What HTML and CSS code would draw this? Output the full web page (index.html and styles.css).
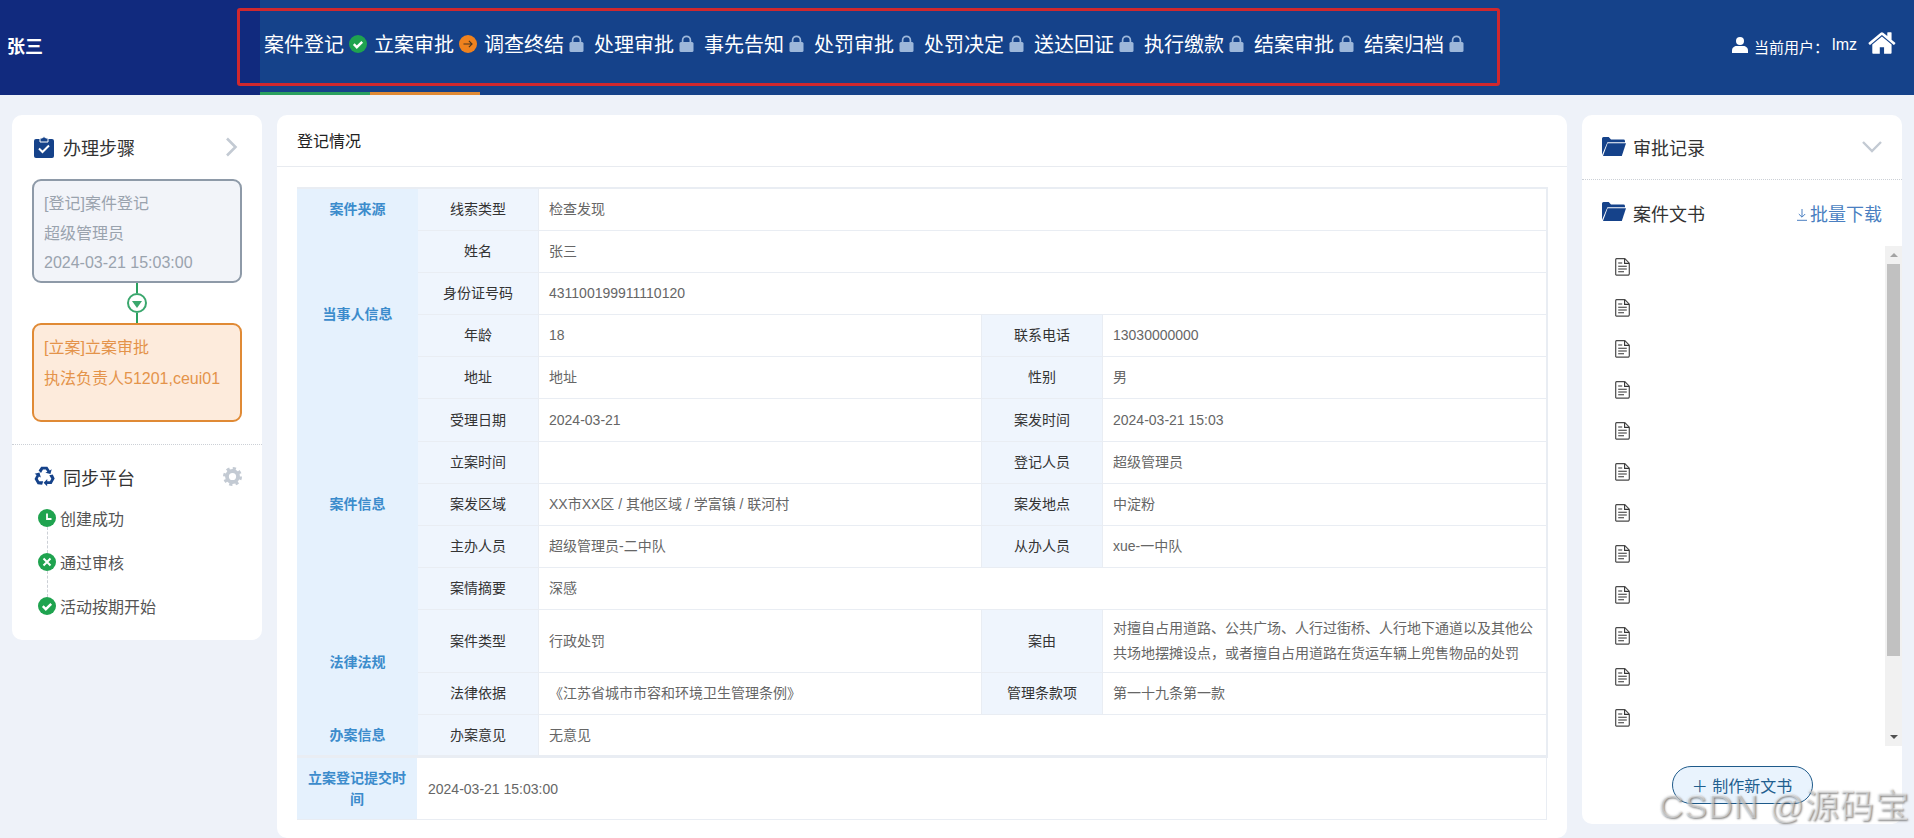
FILE: index.html
```html
<!DOCTYPE html>
<html lang="en">
<head>
    <meta charset="UTF-8">
    <meta name="viewport" content="width=device-width, initial-scale=1.0">
    <title>案件登记</title>
    <link rel="stylesheet" href="styles.css">
</head>
<body>
    <svg class="sprite" xmlns="http://www.w3.org/2000/svg">
        <symbol id="i-lock" viewBox="0 0 15 17">
            <path d="M3.6 8V5.2a3.9 3.9 0 0 1 7.8 0V8" fill="none" stroke="currentColor" stroke-width="1.7"/>
            <rect x="0.5" y="7" width="14" height="10" rx="1.5" fill="currentColor"/>
        </symbol>
        <symbol id="i-check" viewBox="0 0 18 18">
            <circle cx="9" cy="9" r="9" fill="currentColor"/>
            <path d="M4.8 9.2l3 3 5.4-5.4" fill="none" stroke="#fff" stroke-width="2.4"/>
        </symbol>
        <symbol id="i-folder" viewBox="0 0 24 19">
            <path d="M0 18V1.5A1.5 1.5 0 0 1 1.5 0h5.2L9 2.6h12.5A1.5 1.5 0 0 1 23 4v1.2H5.4z" fill="#15428a"/>
            <path d="M5.6 6.2H24l-4.2 12.8H1z" fill="#15428a"/>
        </symbol>
        <symbol id="i-doc" viewBox="0 0 15 18">
            <path d="M1.5 0.7h8.3l4.5 4.5v10.6a1.4 1.4 0 0 1-1.4 1.4H1.5a1 1 0 0 1-.8-1.2V1.6a1 1 0 0 1 .8-.9z" fill="#fff" stroke="#4a4a4a" stroke-width="1.2"/>
            <path d="M9.6 1v4.4h4.4M3.2 5h4M3.2 8.2h8.6M3.2 11h8.6M3.2 13.8h5.8" fill="none" stroke="#333" stroke-width="1.1"/>
        </symbol>
    </svg>

    <header class="top-bar">
        <div class="top-name">张三</div>
        <nav class="flow-nav">
            <div class="flow-item done">
                <span>案件登记</span>
                <svg class="flow-icon status-green"><use href="#i-check"/></svg>
            </div>
            <div class="flow-item current">
                <span>立案审批</span>
                <svg class="flow-icon status-orange" viewBox="0 0 16 16">
                    <circle cx="8" cy="8" r="8" fill="currentColor"/>
                    <path d="M4 8h7.5M8.8 5.2L11.6 8l-2.8 2.8" fill="none" stroke="#4a3520" stroke-width="1"/>
                </svg>
            </div>
            <div class="flow-item"><span>调查终结</span><svg class="flow-lock"><use href="#i-lock"/></svg></div>
            <div class="flow-item"><span>处理审批</span><svg class="flow-lock"><use href="#i-lock"/></svg></div>
            <div class="flow-item"><span>事先告知</span><svg class="flow-lock"><use href="#i-lock"/></svg></div>
            <div class="flow-item"><span>处罚审批</span><svg class="flow-lock"><use href="#i-lock"/></svg></div>
            <div class="flow-item"><span>处罚决定</span><svg class="flow-lock"><use href="#i-lock"/></svg></div>
            <div class="flow-item"><span>送达回证</span><svg class="flow-lock"><use href="#i-lock"/></svg></div>
            <div class="flow-item"><span>执行缴款</span><svg class="flow-lock"><use href="#i-lock"/></svg></div>
            <div class="flow-item"><span>结案审批</span><svg class="flow-lock"><use href="#i-lock"/></svg></div>
            <div class="flow-item"><span>结案归档</span><svg class="flow-lock"><use href="#i-lock"/></svg></div>
        </nav>
        <div class="top-user">
            <svg class="user-icon" viewBox="0 0 16 16">
                <circle cx="8" cy="4" r="4" fill="#fff"/>
                <path d="M0 16v-2.400C0 10.600 2.400 9 4.600 9h6.800c2.200 0 4.600 1.600 4.600 4.600V16z" fill="#fff"/>
            </svg>
            <span class="user-label">当前用户：</span>
            <span class="user-name">lmz</span>
            <svg class="home-icon" viewBox="0 0 1792 1792">
                <path fill="#fff" d="M1408 992v480q0 26-19 45t-45 19h-384v-384h-256v384h-384q-26 0-45-19t-19-45v-480q0-1 .5-3t.5-3l575-474 575 474q1 2 1 6zm223-69l-62 74q-8 9-21 11h-3q-13 0-21-7l-692-577-692 577q-12 8-24 7-13-2-21-11l-62-74q-8-10-7-23.500t11-21.500l719-599q32-26 76-26t76 26l244 204v-195q0-14 9-23t23-9h192q14 0 23 9t9 23v408l219 182q10 8 11 21.500t-7 23.500z"/>
            </svg>
        </div>
    </header>
    <div class="annotation-box"></div>

    <main class="page-main">
        <aside class="card left-card">
            <div class="section-head">
                <svg class="head-icon" viewBox="0 0 20 22">
                    <path d="M2 3h16a2 2 0 0 1 2 2v15a2 2 0 0 1-2 2H2a2 2 0 0 1-2-2V5a2 2 0 0 1 2-2z" fill="#15428a"/>
                    <path d="M6 2h2.300a1.800 1.800 0 0 1 3.400 0H14v4H6z" fill="#15428a" stroke="#fff" stroke-width="1"/>
                    <path d="M5 12.500l3.500 3.500 6.500-6.500" fill="none" stroke="#fff" stroke-width="2"/>
                </svg>
                <span class="head-title">办理步骤</span>
                <svg class="chevron-right" viewBox="0 0 13 20">
                    <path d="M2 1.500l8.500 8.500L2 18.500" fill="none" stroke="#c3cad3" stroke-width="2.600"/>
                </svg>
            </div>
            <div class="steps">
                <div class="step-box step-done">
                    <div class="step-line">[登记]案件登记</div>
                    <div class="step-line">超级管理员</div>
                    <div class="step-line">2024-03-21 15:03:00</div>
                </div>
                <div class="step-link">
                    <span class="link-bar"></span>
                    <span class="link-dot"><span class="link-arrow"></span></span>
                    <span class="link-bar"></span>
                </div>
                <div class="step-box step-active">
                    <div class="step-line">[立案]立案审批</div>
                    <div class="step-line">执法负责人51201,ceui01</div>
                </div>
            </div>
            <div class="section-head with-rule">
                <svg class="recycle-icon" viewBox="-9.600 -9.600 19.200 19.200">
                    <path id="recycle-arm" fill="#15428a" d="M-5.400 -5.600L-3 -9H2.600L4.800 -5.600 6.600 -6.600 5.400 -2.200 .8 -3.400 2.600 -4.400 1.200 -6.400H-1.400L-3.200 -3.200z"/>
                    <use href="#recycle-arm" transform="rotate(120)"/>
                    <use href="#recycle-arm" transform="rotate(240)"/>
                </svg>
                <span class="head-title">同步平台</span>
                <svg class="gear-icon" viewBox="-10 -10 20 20">
                    <circle r="5.800" fill="none" stroke="#c3cad3" stroke-width="4"/>
                    <circle r="8.300" fill="none" stroke="#c3cad3" stroke-width="3.400" stroke-dasharray="3.300 3.220"/>
                </svg>
            </div>
            <div class="timeline">
                <div class="tl-item">
                    <svg class="tl-icon" viewBox="0 0 18 18">
                        <circle cx="9" cy="9" r="9" fill="#1fa34f"/>
                        <path d="M9 4.500V10h4.500" fill="none" stroke="#fff" stroke-width="1.800"/>
                    </svg>
                    <span>创建成功</span>
                </div>
                <div class="tl-dash"></div>
                <div class="tl-item">
                    <svg class="tl-icon" viewBox="0 0 18 18">
                        <circle cx="9" cy="9" r="9" fill="#1fa34f"/>
                        <path d="M5.500 5.500l7 7M12.500 5.500l-7 7" fill="none" stroke="#fff" stroke-width="2"/>
                    </svg>
                    <span>通过审核</span>
                </div>
                <div class="tl-dash"></div>
                <div class="tl-item">
                    <svg class="tl-icon status-green"><use href="#i-check"/></svg>
                    <span>活动按期开始</span>
                </div>
            </div>
        </aside>

        <section class="card center-card">
            <div class="center-head">登记情况</div>
            <div class="center-body">
                <table class="info-table">
                    <colgroup>
                        <col class="col-group"><col class="col-label"><col class="col-value"><col class="col-label"><col>
                    </colgroup>
                    <tr>
                        <td class="group-cell">案件来源</td>
                        <td class="label-cell">线索类型</td>
                        <td colspan="3">检查发现</td>
                    </tr>
                    <tr>
                        <td class="group-cell" rowspan="4">当事人信息</td>
                        <td class="label-cell">姓名</td>
                        <td colspan="3">张三</td>
                    </tr>
                    <tr>
                        <td class="label-cell">身份证号码</td>
                        <td colspan="3">431100199911110120</td>
                    </tr>
                    <tr>
                        <td class="label-cell">年龄</td>
                        <td>18</td>
                        <td class="label-cell">联系电话</td>
                        <td>13030000000</td>
                    </tr>
                    <tr>
                        <td class="label-cell">地址</td>
                        <td>地址</td>
                        <td class="label-cell">性别</td>
                        <td>男</td>
                    </tr>
                    <tr>
                        <td class="group-cell" rowspan="5">案件信息</td>
                        <td class="label-cell">受理日期</td>
                        <td>2024-03-21</td>
                        <td class="label-cell">案发时间</td>
                        <td>2024-03-21 15:03</td>
                    </tr>
                    <tr>
                        <td class="label-cell">立案时间</td>
                        <td></td>
                        <td class="label-cell">登记人员</td>
                        <td>超级管理员</td>
                    </tr>
                    <tr>
                        <td class="label-cell">案发区域</td>
                        <td>XX市XX区 / 其他区域 / 学富镇 / 联河村</td>
                        <td class="label-cell">案发地点</td>
                        <td>中淀粉</td>
                    </tr>
                    <tr>
                        <td class="label-cell">主办人员</td>
                        <td>超级管理员-二中队</td>
                        <td class="label-cell">从办人员</td>
                        <td>xue-一中队</td>
                    </tr>
                    <tr>
                        <td class="label-cell">案情摘要</td>
                        <td colspan="3">深感</td>
                    </tr>
                    <tr class="tall-row">
                        <td class="group-cell" rowspan="2">法律法规</td>
                        <td class="label-cell">案件类型</td>
                        <td>行政处罚</td>
                        <td class="label-cell">案由</td>
                        <td>对擅自占用道路、公共广场、人行过街桥、人行地下通道以及其他公共场地摆摊设点，或者擅自占用道路在货运车辆上兜售物品的处罚</td>
                    </tr>
                    <tr>
                        <td class="label-cell">法律依据</td>
                        <td>《江苏省城市市容和环境卫生管理条例》</td>
                        <td class="label-cell">管理条款项</td>
                        <td>第一十九条第一款</td>
                    </tr>
                    <tr>
                        <td class="group-cell">办案信息</td>
                        <td class="label-cell">办案意见</td>
                        <td colspan="3">无意见</td>
                    </tr>
                </table>
                <div class="submit-row">
                    <div class="submit-label">立案登记提交时间</div>
                    <div class="submit-value">2024-03-21 15:03:00</div>
                </div>
            </div>
        </section>

        <aside class="card right-card">
            <div class="section-head side-head">
                <svg class="folder-icon"><use href="#i-folder"/></svg>
                <span class="head-title">审批记录</span>
                <svg class="chevron-down" viewBox="0 0 20 12">
                    <path d="M1 1l9 9 9-9" fill="none" stroke="#c3cad3" stroke-width="2.400"/>
                </svg>
            </div>
            <div class="section-head side-head docs-head with-rule">
                <svg class="folder-icon"><use href="#i-folder"/></svg>
                <span class="head-title">案件文书</span>
                <a class="batch-link">
                    <svg class="batch-icon" viewBox="0 0 10 12">
                        <path d="M5 0v8M1.800 5L5 8.200 8.200 5M0 11.300h10" fill="none" stroke="#4a7fc1" stroke-width="1"/>
                    </svg>批量下载
                </a>
            </div>
            <div class="doc-wrap">
                <div class="doc-list">
                    <div class="doc-row"><svg class="doc-icon"><use href="#i-doc"/></svg></div>
                    <div class="doc-row"><svg class="doc-icon"><use href="#i-doc"/></svg></div>
                    <div class="doc-row"><svg class="doc-icon"><use href="#i-doc"/></svg></div>
                    <div class="doc-row"><svg class="doc-icon"><use href="#i-doc"/></svg></div>
                    <div class="doc-row"><svg class="doc-icon"><use href="#i-doc"/></svg></div>
                    <div class="doc-row"><svg class="doc-icon"><use href="#i-doc"/></svg></div>
                    <div class="doc-row"><svg class="doc-icon"><use href="#i-doc"/></svg></div>
                    <div class="doc-row"><svg class="doc-icon"><use href="#i-doc"/></svg></div>
                    <div class="doc-row"><svg class="doc-icon"><use href="#i-doc"/></svg></div>
                    <div class="doc-row"><svg class="doc-icon"><use href="#i-doc"/></svg></div>
                    <div class="doc-row"><svg class="doc-icon"><use href="#i-doc"/></svg></div>
                    <div class="doc-row"><svg class="doc-icon"><use href="#i-doc"/></svg></div>
                </div>
                <div class="fake-scroll">
                    <span class="scroll-up"></span>
                    <span class="scroll-thumb"></span>
                    <span class="scroll-down"></span>
                </div>
            </div>
            <button class="new-doc-btn" type="button">＋ 制作新文书</button>
        </aside>
    </main>

    <div class="watermark">CSDN @源码宝</div>
</body>
</html>
```

FILE: styles.css
```css
* {
    box-sizing: border-box;
}

html,
body {
    height: 100%;
}

body {
    margin: 0;
    overflow: hidden;
    position: relative;
    background: #eef2f9;
    color: #333;
    font-family: "Liberation Sans", "Noto Sans CJK SC", sans-serif;
    font-size: 14px;
}

.sprite {
    display: none;
}

/* top bar */
.top-bar {
    display: flex;
    height: 95px;
    background: #15428a;
    color: #fff;
}

.top-name {
    width: 260px;
    padding: 0 0 6px 7px;
    display: flex;
    align-items: center;
    background: #112a7e;
    font-size: 18px;
    font-weight: bold;
}

.flow-nav {
    display: flex;
}

.flow-item {
    width: 110px;
    padding: 0 0 5px 4px;
    display: flex;
    align-items: center;
    gap: 5px;
    font-size: 20px;
    white-space: nowrap;
    border-bottom: 3px solid transparent;
}

.flow-item.done {
    border-bottom-color: #2ba05f;
}

.flow-item.current {
    border-bottom-color: #e08a35;
}

.flow-icon {
    width: 18px;
    height: 18px;
}

.flow-lock {
    width: 15px;
    height: 17px;
    color: #9db7da;
}

.status-green {
    color: #1fa34f;
}

.status-orange {
    color: #f0821e;
}

.top-user {
    margin-left: auto;
    padding: 0 16px 6px 0;
    display: flex;
    align-items: center;
}

.user-icon {
    width: 16px;
    height: 16px;
    margin-right: 6px;
}

.user-label {
    font-size: 15px;
    margin-top: 3px;
}

.user-name {
    font-size: 16px;
    margin-left: 3px;
}

.home-icon {
    width: 30px;
    height: 30px;
    margin-left: 11px;
    margin-top: -4px;
}

.annotation-box {
    position: absolute;
    left: 237px;
    top: 8px;
    width: 1263px;
    height: 78px;
    border: 3px solid #d0282e;
    border-radius: 3px;
}

/* page columns */
.page-main {
    display: flex;
    align-items: flex-start;
    gap: 15px;
    padding: 20px 12px 0;
}

.card {
    background: #fff;
    border-radius: 10px;
}

.left-card {
    width: 250px;
    height: 525px;
}

.center-card {
    width: 1290px;
    height: 723px;
}

.right-card {
    width: 320px;
    height: 709px;
    display: flex;
    flex-direction: column;
}

.section-head {
    height: 64px;
    padding: 0 20px 1px 22px;
    display: flex;
    align-items: center;
}

.head-icon {
    width: 20px;
    height: 22px;
    margin-right: 9px;
}

.recycle-icon {
    width: 21px;
    height: 21px;
    margin-right: 8px;
}

.head-title {
    font-size: 18px;
    color: #333;
}

.chevron-right {
    width: 13px;
    height: 20px;
    margin-left: auto;
    margin-right: 4px;
}

.gear-icon {
    width: 19px;
    height: 19px;
    margin-left: auto;
}

.with-rule {
    height: 65px;
    border-top: 1px dotted #ccd0d6;
}

/* steps */
.steps {
    padding: 0 20px 22px;
}

.step-box {
    width: 210px;
    padding: 8px 10px;
    border: 2px solid;
    border-radius: 9px;
    font-size: 16px;
}

.step-line {
    height: 29.5px;
    line-height: 29.5px;
    white-space: nowrap;
}

.step-done {
    height: 104px;
    background: #f2f4f9;
    border-color: #8e9aa8;
    color: #9aa3ae;
}

.step-active {
    height: 99px;
    padding-top: 7px;
    background: #fdebdc;
    border-color: #e08a35;
    color: #e4934a;
}

.step-active .step-line {
    height: 31px;
    line-height: 31px;
}

.step-link {
    height: 40px;
    display: flex;
    flex-direction: column;
    align-items: center;
}

.link-bar {
    flex: 1;
    width: 2px;
    background: #2ba05f;
}

.link-dot {
    width: 20px;
    height: 20px;
    display: flex;
    align-items: center;
    justify-content: center;
    border: 2px solid #3aa76d;
    border-radius: 50%;
}

.link-arrow {
    margin-top: 2px;
    border-top: 7px solid #3aa76d;
    border-left: 5px solid transparent;
    border-right: 5px solid transparent;
}

/* timeline */
.timeline {
    padding-left: 26px;
    font-size: 16px;
    color: #555;
}

.tl-item {
    height: 18px;
    display: flex;
    align-items: center;
    gap: 4px;
    white-space: nowrap;
}

.tl-icon {
    width: 18px;
    height: 18px;
    flex: none;
}

.tl-dash {
    height: 26px;
    margin-left: 9px;
    border-left: 1px dashed #ccd0d6;
}

/* center table */
.center-head {
    height: 52px;
    padding: 0 20px 2px;
    display: flex;
    align-items: center;
    border-bottom: 1px solid #e8ebf0;
    font-size: 16px;
    color: #222;
}

.center-body {
    padding: 20px 20px 0;
}

.info-table {
    width: 1251px;
    table-layout: fixed;
    border-collapse: collapse;
    border-top: 2px solid #e9edf3;
    border-right: 2px solid #e9edf3;
    border-bottom: 3px solid #e9edf3;
}

.col-group {
    width: 120px;
}

.col-label {
    width: 121px;
}

.col-value {
    width: 443px;
}

.info-table td {
    height: 42.2px;
    padding: 0 10px;
    border: 1px solid #e9edf3;
    color: #666;
    line-height: 25px;
}

.info-table .tall-row td {
    height: 62.5px;
}

.info-table .group-cell {
    background: #e5f1fd;
    border-color: #e5f1fd;
    color: #3c8ccc;
    font-weight: bold;
    text-align: center;
}

.info-table .label-cell {
    background: #eff5fd;
    color: #333;
    text-align: center;
}

.submit-row {
    width: 1250px;
    height: 62px;
    display: flex;
    border: 1px solid #e9edf3;
    border-top: 0;
    border-left: 0;
}

.submit-label {
    width: 120px;
    display: flex;
    align-items: center;
    padding: 0 5px;
    background: #e5f1fd;
    color: #3c8ccc;
    font-weight: bold;
    line-height: 21px;
    text-align: center;
}

.submit-value {
    padding-left: 11px;
    display: flex;
    align-items: center;
    color: #666;
}

/* right column */
.side-head {
    padding: 0 20px 1px;
}

.docs-head {
    height: 67px;
    padding-bottom: 0;
}

.folder-icon {
    width: 24px;
    height: 19px;
    margin-right: 7px;
}

.docs-head .folder-icon {
    margin-top: -3px;
}

.chevron-down {
    width: 20px;
    height: 12px;
    margin-left: auto;
}

.batch-link {
    margin-left: auto;
    font-size: 18px;
    color: #4a7fc1;
    display: flex;
    align-items: center;
    gap: 3px;
}

.batch-icon {
    width: 10px;
    height: 12px;
    margin-top: 4px;
}

.doc-wrap {
    height: 500px;
    display: flex;
}

.doc-list {
    flex: 1;
    padding-left: 33px;
}

.doc-row {
    height: 41px;
    display: flex;
    align-items: center;
}

.doc-icon {
    width: 15px;
    height: 18px;
}

.fake-scroll {
    width: 17px;
    display: flex;
    flex-direction: column;
    align-items: center;
    background: #f1f1f1;
}

.scroll-up,
.scroll-down {
    width: 0;
    margin: 7px 0;
    border-left: 4px solid transparent;
    border-right: 4px solid transparent;
}

.scroll-up {
    border-bottom: 4px solid #a3a3a3;
}

.scroll-down {
    margin-top: auto;
    border-top: 4px solid #505050;
}

.scroll-thumb {
    width: 13px;
    height: 392px;
    margin-top: 0;
    background: #c1c1c1;
}

.new-doc-btn {
    width: 141px;
    height: 38px;
    margin: 20px auto 0;
    padding: 0;
    border: 1px solid #1e5a8a;
    border-radius: 19px;
    background: #e9f3fd;
    color: #1f5f8f;
    font-family: inherit;
    font-size: 16px;
}

.watermark {
    position: absolute;
    right: 4px;
    bottom: 12px;
    font-size: 34px;
    letter-spacing: 1px;
    line-height: 40px;
    white-space: nowrap;
    color: rgba(255, 255, 255, 0.45);
    text-shadow: 1px 1px 2px rgba(90, 90, 90, 0.75);
}
```
